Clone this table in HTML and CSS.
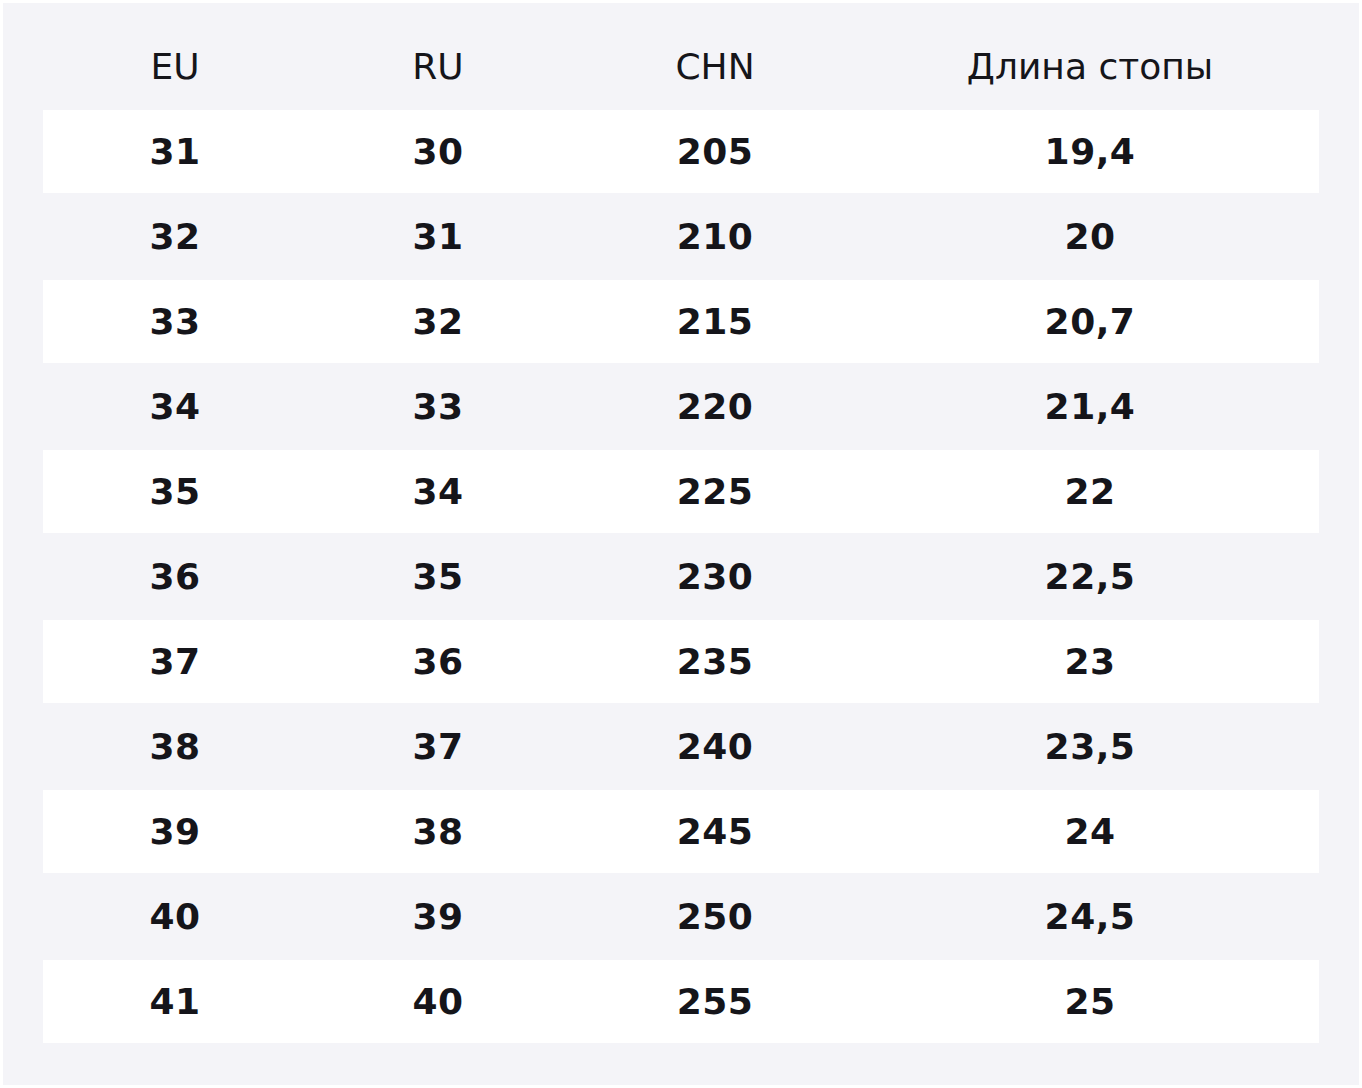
FILE: index.html
```html
<!DOCTYPE html>
<html lang="ru">
<head>
<meta charset="utf-8">
<title>Таблица размеров</title>
<link rel="stylesheet" href="styles.css">
</head>
<body>
<div class="panel">
  <div class="row head"><div>EU</div><div>RU</div><div>CHN</div><div>Длина стопы</div></div>
  <div class="row light"><div>31</div><div>30</div><div>205</div><div>19,4</div></div>
  <div class="row dark"><div>32</div><div>31</div><div>210</div><div>20</div></div>
  <div class="row light"><div>33</div><div>32</div><div>215</div><div>20,7</div></div>
  <div class="row dark"><div>34</div><div>33</div><div>220</div><div>21,4</div></div>
  <div class="row light"><div>35</div><div>34</div><div>225</div><div>22</div></div>
  <div class="row dark"><div>36</div><div>35</div><div>230</div><div>22,5</div></div>
  <div class="row light"><div>37</div><div>36</div><div>235</div><div>23</div></div>
  <div class="row dark"><div>38</div><div>37</div><div>240</div><div>23,5</div></div>
  <div class="row light"><div>39</div><div>38</div><div>245</div><div>24</div></div>
  <div class="row dark"><div>40</div><div>39</div><div>250</div><div>24,5</div></div>
  <div class="row light"><div>41</div><div>40</div><div>255</div><div>25</div></div>
</div>
</body>
</html>
```

FILE: styles.css
```css
html, body {
  margin: 0;
  padding: 0;
  background: #ffffff;
}
body {
  padding: 3px;
  font-family: "DejaVu Sans", sans-serif;
  color: #15151a;
}
.panel {
  background: #f4f4f8;
  width: 1356px;
  height: 1082px;
  box-sizing: border-box;
  padding: 20px 40px 0 40px;
}
.row {
  display: grid;
  grid-template-columns: 264px 262px 292px 458px;
  align-items: center;
  text-align: center;
  font-size: 36px;
  font-weight: bold;
  letter-spacing: 0.5px;
}
.head, .dark {
  height: 87px;
}
.light {
  height: 83px;
  background: #ffffff;
}
.head {
  font-weight: normal;
  font-size: 36px;
  letter-spacing: 0;
}
```
